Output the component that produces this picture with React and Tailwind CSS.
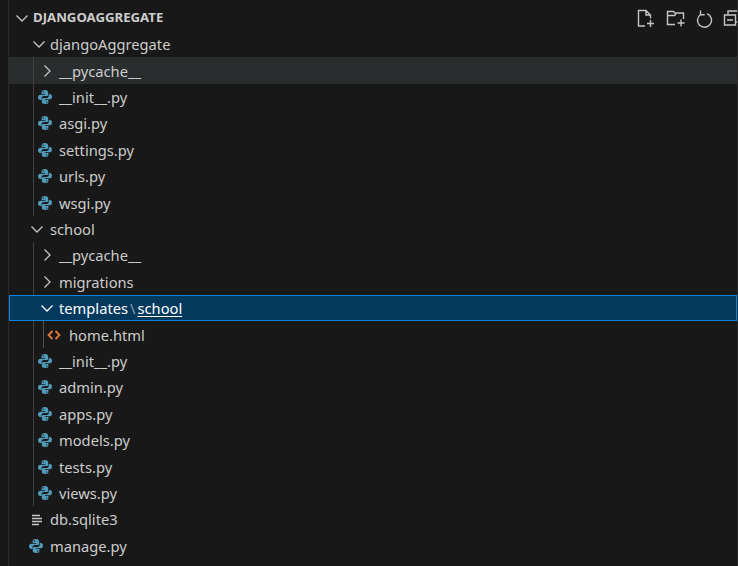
const Chevron = ({ open, x, color = "#c5c5c5" }) => (
  <svg width="16" height="16" viewBox="0 0 16 16" fill="none" stroke={color} strokeWidth="1.3" className="shrink-0" style={{ marginLeft: x }}>
    {open ? <path d="M2.5 5.5 8 11l5.5-5.5" /> : <path d="M5.5 2.5 11 8l-5.5 5.5" />}
  </svg>
);

const Py = () => (
  <svg width="16" height="16" viewBox="0 0 16 16" className="shrink-0">
    <path fill="#519aba" d="M7.8 1C5.2 1 4.6 2 4.6 3.3V5h3.6v.7H3.3C1.9 5.7 1 6.7 1 8.3 1 10 1.9 11 3.1 11h1.5V9.3c0-1.2 1-2.2 2.3-2.2h2.6c1 0 1.7-.7 1.7-1.7V3.3C11.2 2 10.2 1 7.8 1ZM6.3 2.2a.7.7 0 1 1 0 1.4.7.7 0 0 1 0-1.4Z" />
    <path fill="#519aba" d="M8.2 15c2.6 0 3.2-1 3.2-2.3V11H7.8v-.7h4.9c1.4 0 2.3-1 2.3-2.6C15 6 14.1 5 12.9 5h-1.1v1.7c0 1.2-1 2.2-2.3 2.2H6.5c-1 0-1.7.7-1.7 1.7v2.1C4.8 14 5.8 15 8.2 15Zm1.5-1.2a.7.7 0 1 1 0-1.4.7.7 0 0 1 0 1.4Z" />
  </svg>
);

const Html = () => (
  <svg width="16" height="16" viewBox="0 0 16 16" fill="none" stroke="#e37933" strokeWidth="1.8" className="shrink-0">
    <path d="M6.5 4 2.5 8l4 4M9.5 4l4 4-4 4" />
  </svg>
);

const Db = () => (
  <svg width="16" height="16" viewBox="0 0 16 16" fill="none" stroke="#c5c5c5" strokeWidth="1.6" className="shrink-0">
    <path d="M3 3.5h8M3 6.5h10M3 9.5h10M3 12.5h7" />
  </svg>
);

const rows = [
  { t: "djangoAggregate", kind: "open", c: 31, tx: 50 },
  { t: "__pycache__", kind: "closed", c: 39, tx: 59, hover: true, g: 1 },
  { t: "__init__.py", kind: "py", c: 37, tx: 59, g: 1 },
  { t: "asgi.py", kind: "py", c: 37, tx: 59, g: 1 },
  { t: "settings.py", kind: "py", c: 37, tx: 59, g: 1 },
  { t: "urls.py", kind: "py", c: 37, tx: 59, g: 1 },
  { t: "wsgi.py", kind: "py", c: 37, tx: 59, g: 1 },
  { t: "school", kind: "open", c: 29, tx: 50 },
  { t: "__pycache__", kind: "closed", c: 39, tx: 59, g: 1 },
  { t: "migrations", kind: "closed", c: 39, tx: 59, g: 1 },
  { t: "templates", kind: "open", c: 39, tx: 59, g: 1, sel: true },
  { t: "home.html", kind: "html", c: 46, tx: 69, g: 2 },
  { t: "__init__.py", kind: "py", c: 37, tx: 59, g: 1 },
  { t: "admin.py", kind: "py", c: 37, tx: 59, g: 1 },
  { t: "apps.py", kind: "py", c: 37, tx: 59, g: 1 },
  { t: "models.py", kind: "py", c: 37, tx: 59, g: 1 },
  { t: "tests.py", kind: "py", c: 37, tx: 59, g: 1 },
  { t: "views.py", kind: "py", c: 37, tx: 59, g: 1 },
  { t: "db.sqlite3", kind: "db", c: 29, tx: 50 },
  { t: "manage.py", kind: "py", c: 28, tx: 50 },
];

function Row({ r }) {
  const bg = r.sel
    ? "bg-[#04395e] outline outline-1 -outline-offset-1 outline-[#0a84e0]"
    : r.hover
      ? "bg-[#2a2d2e]"
      : "";
  const inset = 9;
  return (
    <div className={`relative flex h-[26.41px] items-center ${bg}`}>
      {r.g >= 1 && !r.sel && <span className="absolute left-[24px] top-0 bottom-0 w-px bg-[#404040]" />}
      {r.g === 2 && <span className="absolute left-[34px] top-0 bottom-0 w-px bg-[#505050]" />}
      <span className="flex shrink-0 items-center" style={{ width: r.tx - inset }}>
        {r.kind === "open" || r.kind === "closed" ? (
          <Chevron open={r.kind === "open"} x={r.c - inset} color={r.sel ? "#ffffff" : "#c5c5c5"} />
        ) : null}
        {r.kind === "py" && <span className="flex" style={{ marginLeft: r.c - inset }}><Py /></span>}
        {r.kind === "db" && <span className="flex" style={{ marginLeft: r.c - inset }}><Db /></span>}
        {r.kind === "html" && <span className="flex" style={{ marginLeft: r.c - inset }}><Html /></span>}
      </span>
      <span className={`whitespace-nowrap text-[14.7px] ${r.sel ? "text-white" : "text-[#cccccc]"}`}>
        {r.t}
        {r.sel && (
          <>
            <span className="mx-[2px] text-[#8a9aa6]">\</span>
            <span className="underline underline-offset-2">school</span>
          </>
        )}
      </span>
    </div>
  );
}

export default function App() {
  return (
    <div className="relative h-[566px] w-[738px] overflow-hidden bg-[#181818] font-['Noto_Sans','Open_Sans',sans-serif]">
      <div className="flex h-[31px] items-center justify-between pl-[12px] pt-[5px]">
        <div className="flex items-center">
          <Chevron open x={2} />
          <span className="ml-[3px] text-[13.2px] font-bold text-[#cccccc]">DJANGOAGGREGATE</span>
        </div>
        <div className="flex translate-x-[3px] items-center gap-[10px]">
          <svg width="19" height="19" viewBox="0 0 19 19" fill="none" stroke="#c5c5c5" strokeWidth="1.4"><path d="M8 17H1.5V1.5h7.5l4.5 4.5V9.5M9 1.5V6h4.5M13.5 11v7M10 14.5h7" /></svg>
          <svg width="20" height="19" viewBox="0 0 20 19" fill="none" stroke="#c5c5c5" strokeWidth="1.4"><path d="M9 15.5H1.5v-13h6l1.5 1.5h8.5v6M1.5 6.5h7L10 5M15 10.5v7M11.5 14h7" /></svg>
          <svg width="17" height="19" viewBox="0 0 17 19" fill="none" stroke="#c5c5c5" strokeWidth="1.4"><path d="M4.5 5.5a7 7 0 1 0 6.5-.8M4.5 1.5v4.2h4.2" /></svg>
          <svg width="18" height="18" viewBox="0 0 18 18" fill="none" stroke="#c5c5c5" strokeWidth="1.4"><path d="M5 5V2h12v11h-4M1.5 6h11v10h-11zM4 11h6" /></svg>
        </div>
      </div>
      <div className="ml-[9px] mr-px">
        {rows.map((r, i) => (
          <Row key={i} r={r} />
        ))}
      </div>
      <span className="absolute left-[8px] top-0 bottom-0 w-px bg-[#2b2b2b]" />
      <span className="absolute right-0 top-0 bottom-0 w-px bg-[#2b2b2b]" />
    </div>
  );
}
